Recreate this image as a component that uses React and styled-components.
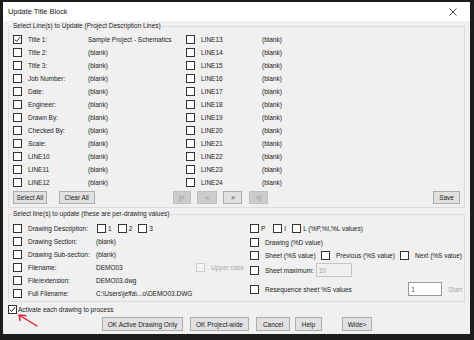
import React from 'react'
import styled, { createGlobalStyle } from 'styled-components'

const GlobalStyle = createGlobalStyle`
  html, body {
    margin: 0;
    padding: 0;
    background: #1c1c1c;
  }
  body {
    font-family: "Liberation Sans", Arial, sans-serif;
    font-size: 6.5px;
    color: #1a1a1a;
  }
`

const lines = [
  ['Title 1:', 'Sample Project - Schematics', true],
  ['Title 2:', '(blank)'],
  ['Title 3:', '(blank)'],
  ['Job Number:', '(blank)'],
  ['Date:', '(blank)'],
  ['Engineer:', '(blank)'],
  ['Drawn By:', '(blank)'],
  ['Checked By:', '(blank)'],
  ['Scale:', '(blank)'],
  ['LINE10', '(blank)'],
  ['LINE11', '(blank)'],
  ['LINE12', '(blank)'],
]

function Check({ checked, disabled }) {
  return (
    <Box $disabled={disabled}>
      {checked && (
        <svg width="7" height="7" viewBox="0 0 7 7">
          <path d="M0.8 3.6 L2.7 5.4 L6.2 1.2" fill="none" stroke="#222" strokeWidth="1" />
        </svg>
      )}
    </Box>
  )
}

function App() {
  return (
    <Page>
      <GlobalStyle />
      <Window>
        <TitleBar>
          <Title>Update Title Block</Title>
          <svg width="8" height="8" viewBox="0 0 8 8">
            <path d="M0.5 0.5 L7.5 7.5 M7.5 0.5 L0.5 7.5" stroke="#333" strokeWidth="0.9" />
          </svg>
        </TitleBar>
        <Body>
          <Group>
            <Legend>Select Line(s) to Update (Project Description Lines)</Legend>
            <LineGrid>
              {lines.map(([label, value, checked], i) => (
                <React.Fragment key={label}>
                  <Item><Check checked={checked} /><span>{label}</span></Item>
                  <span>{value}</span>
                  <Item><Check /><span>LINE{13 + i}</span></Item>
                  <span>(blank)</span>
                </React.Fragment>
              ))}
            </LineGrid>
            <ButtonRow>
              <Button $w={34}>Select All</Button>
              <Button $w={36} $ml={12}>Clear All</Button>
              <Button $w={19} $ml={78} disabled>|&lt;</Button>
              <Button $w={20} $ml={6} disabled>&lt;</Button>
              <Button $w={19} $ml={6}>&gt;</Button>
              <Button $w={19} $ml={7} disabled>&gt;|</Button>
              <Button $w={27} $ml={165}>Save</Button>
            </ButtonRow>
          </Group>

          <Group $mt={1} $pt={3} $pb={1}>
            <Legend>Select line(s) to update (these are per-drawing values)</Legend>
            <Columns>
              <LeftGrid>
                <Item><Check /><span>Drawing Description:</span></Item>
                <Small>
                  <SmallItem><Check /><span>1</span></SmallItem>
                  <SmallItem><Check /><span>2</span></SmallItem>
                  <SmallItem><Check /><span>3</span></SmallItem>
                </Small>
                <span />
                <Item><Check /><span>Drawing Section:</span></Item>
                <span>(blank)</span>
                <span />
                <Item><Check /><span>Drawing Sub-section:</span></Item>
                <span>(blank)</span>
                <span />
                <Item><Check /><span>Filename:</span></Item>
                <span>DEMO03</span>
                <Item $muted><Check disabled /><span>Upper case</span></Item>
                <Item><Check /><span>File/extension:</span></Item>
                <span>DEMO03.dwg</span>
                <span />
                <Item><Check /><span>Full Filename:</span></Item>
                <Wide>C:\Users\jeffa\...o\DEMO03.DWG</Wide>
              </LeftGrid>

              <RightCol>
                <RightRow>
                  <SmallItem><Check /><span>P</span></SmallItem>
                  <SmallItem $ml={8}><Check /><span>I</span></SmallItem>
                  <SmallItem $ml={6}><Check /><span>L (%P,%I,%L values)</span></SmallItem>
                </RightRow>
                <RightRow $mt={1}>
                  <Item><Check /><span>Drawing (%D value)</span></Item>
                </RightRow>
                <RightRow>
                  <Item $w={71}><Check /><span>Sheet (%S value)</span></Item>
                  <Item $w={79}><Check /><span>Previous (%S value)</span></Item>
                  <Item><Check /><span>Next (%S value)</span></Item>
                </RightRow>
                <RightRow $mt={1} $h={14}>
                  <Item $w={66}><Check /><span>Sheet maximum:</span></Item>
                  <Field $w={36} $disabled>10</Field>
                </RightRow>
                <RightRow $mt={5} $h={14}>
                  <Item><Check /><span>Resequence sheet %S values</span></Item>
                  <Spacer />
                  <Field $w={34}>1</Field>
                  <Muted $ml={6}>Start</Muted>
                </RightRow>
              </RightCol>
            </Columns>
          </Group>

          <ActivateRow>
            <Item><Check checked /><span>Activate each drawing to process</span></Item>
            <Arrow width="24" height="16" viewBox="0 0 24 16">
              <path d="M2 2 L20 13 M2 2 L9 2.6 M2 2 L3.2 7.5" fill="none" stroke="#e0202a" strokeWidth="1.4" strokeLinecap="round" />
            </Arrow>
          </ActivateRow>

          <Footer>
            <Button $w={81} $h={14}>OK Active Drawing Only</Button>
            <Button $w={59} $h={14} $ml={7}>OK Project-wide</Button>
            <Button $w={34} $h={14} $ml={7}>Cancel</Button>
            <Button $w={27} $h={14} $ml={5}>Help</Button>
            <Button $w={30} $h={14} $ml={20}>Wide&gt;</Button>
          </Footer>
        </Body>
      </Window>
    </Page>
  )
}

export default App

const Page = styled.div`
  width: 474px;
  height: 340px;
  overflow: hidden;
  padding: 2px 0 0 3px;
  box-sizing: border-box;
`
const Window = styled.div`
  width: 467px;
  height: 332px;
  background: #f0f0f0;
  display: flex;
  flex-direction: column;
`
const TitleBar = styled.div`
  height: 19px;
  background: #ffffff;
  display: flex;
  align-items: center;
  justify-content: space-between;
  padding: 0 13px 0 5px;
  svg { margin-top: 1px; }
`
const Title = styled.span`
  font-size: 7.4px;
  color: #111;
`
const Body = styled.div`
  position: relative;
  flex: 1;
  padding: 0 5px;
  display: flex;
  flex-direction: column;
`
const Group = styled.fieldset`
  margin: ${p => p.$mt || 0}px 0 0 0;
  padding: ${p => p.$pt ?? 2}px 4px ${p => p.$pb ?? 3}px 4px;
  border: 1px solid #dcdcdc;
  min-width: 0;
`
const Legend = styled.legend`
  padding: 0 1px;
  margin-left: -1px;
  line-height: 10px;
`
const LineGrid = styled.div`
  display: grid;
  grid-template-columns: 75px 98px 76px 1fr;
  grid-auto-rows: 13px;
  align-items: center;
  white-space: nowrap;
`
const Box = styled.span`
  width: 9px;
  height: 9px;
  box-sizing: border-box;
  border: 1px solid ${p => (p.$disabled ? '#cfcfcf' : '#333')};
  background: ${p => (p.$disabled ? '#f4f4f4' : '#fff')};
  display: inline-flex;
  align-items: center;
  justify-content: center;
  flex: none;
`
const Item = styled.span`
  display: flex;
  align-items: center;
  gap: 6px;
  white-space: nowrap;
  width: ${p => (p.$w ? p.$w + 'px' : 'auto')};
  color: ${p => (p.$muted ? '#a8a8a8' : 'inherit')};
  flex: none;
`
const SmallItem = styled.span`
  display: flex;
  align-items: center;
  gap: 2px;
  margin-left: ${p => p.$ml || 0}px;
  white-space: nowrap;
`
const Small = styled.span`
  display: flex;
  align-items: center;
  gap: 6px;
  margin-left: 1px;
`
const ButtonRow = styled.div`
  display: flex;
  margin-top: 2px;
`
const Button = styled.button`
  width: ${p => p.$w}px;
  height: ${p => p.$h || 13}px;
  margin-left: ${p => p.$ml || 0}px;
  padding: 0;
  font-family: inherit;
  font-size: 6.5px;
  color: #1a1a1a;
  background: #e1e1e1;
  border: 1px solid #adadad;
  white-space: nowrap;
  &:disabled {
    background: #cccccc;
    border-color: #bfbfbf;
    color: #8a8a8a;
  }
`
const Columns = styled.div`
  display: grid;
  grid-template-columns: 237px 1fr;
`
const LeftGrid = styled.div`
  display: grid;
  grid-template-columns: 83px 100px 1fr;
  grid-auto-rows: 13px;
  align-items: center;
  white-space: nowrap;
`
const Wide = styled.span`
  grid-column: span 2;
`
const RightCol = styled.div`
  display: flex;
  flex-direction: column;
`
const RightRow = styled.div`
  display: flex;
  align-items: center;
  height: ${p => p.$h || 13}px;
  margin-top: ${p => p.$mt || 0}px;
  white-space: nowrap;
`
const Field = styled.span`
  width: ${p => p.$w}px;
  height: 14px;
  box-sizing: border-box;
  border: 1px solid ${p => (p.$disabled ? '#c4c4c4' : '#9a9a9a')};
  background: ${p => (p.$disabled ? '#f0f0f0' : '#fff')};
  color: ${p => (p.$disabled ? '#9d9d9d' : '#555')};
  display: flex;
  align-items: center;
  padding-left: 2px;
`
const Spacer = styled.span`
  flex: 1;
`
const Muted = styled.span`
  color: #a8a8a8;
  margin-left: ${p => p.$ml || 0}px;
`
const ActivateRow = styled.div`
  position: relative;
  height: 12px;
  margin-top: 1px;
  display: flex;
  align-items: center;
  ${Item} { gap: 1px; }
`
const Arrow = styled.svg`
  position: absolute;
  left: 9px;
  top: 10px;
`
const Footer = styled.div`
  display: flex;
  margin-top: 2px;
  padding-left: 94px;
`
